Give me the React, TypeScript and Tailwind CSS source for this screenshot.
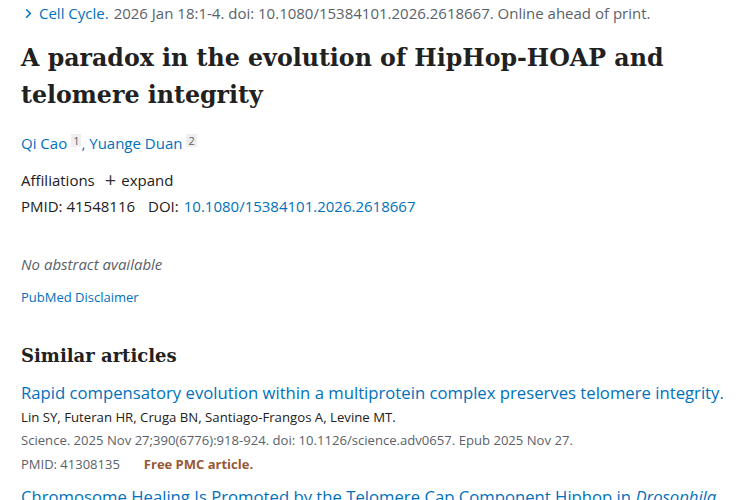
import { ChevronRight } from 'lucide-react'

const sans = "font-['Segoe_UI','Open_Sans','Noto_Sans',sans-serif]"
const serif = "font-['DejaVu_Serif','Liberation_Serif',serif]"

export default function App() {
  return (
    <main className={`${sans} w-[750px] h-[500px] overflow-hidden bg-white pl-[21px] text-[#212121]`}>
      {/* citation line */}
      <div className="flex items-center h-[26px] text-[15px] text-[#5b616b]">
        <ChevronRight className="w-[15px] h-[15px] text-[#0071bc] mr-[3px]" strokeWidth={2.5} />
        <span className="text-[#0071bc]">Cell Cycle.</span>
        <span className="ml-[5px]">2026 Jan 18:1-4. doi: 10.1080/15384101.2026.2618667. Online ahead of print.</span>
      </div>

      <h1 className={`${serif} mt-[14px] text-[23.7px] leading-[37px] font-bold text-[#212121]`}>
        A paradox in the evolution of HipHop-HOAP and<br />telomere integrity
      </h1>

      <div className="mt-[19px] flex items-center text-[15px] text-[#0071bc] h-[20px]">
        <span>Qi Cao</span>
        <span className="ml-[4px] -mt-[6px] text-[11px] leading-[13px] px-[2px] bg-[#eeeeee] text-[#5b616b]">1</span>
        <span>, Yuange Duan</span>
        <span className="ml-[4px] -mt-[6px] text-[11px] leading-[13px] px-[2px] bg-[#eeeeee] text-[#5b616b]">2</span>
      </div>

      <div className="mt-[17px] flex items-center text-[15px] h-[20px]">
        <span>Affiliations</span>
        <span className="ml-[10px] text-[20px] leading-none text-[#333]">+</span>
        <span className="ml-[5px]">expand</span>
      </div>

      <div className="mt-[6px] flex items-center text-[15px] h-[20px]">
        <span>PMID: 41548116</span>
        <span className="ml-[13px]">DOI:</span>
        <span className="ml-[5px] text-[#0071bc]">10.1080/15384101.2026.2618667</span>
      </div>

      <div className="mt-[37px] text-[15px] italic text-[#5b616b] h-[20px]">No abstract available</div>

      <div className="mt-[15px] text-[13px] text-[#0071bc] h-[18px]">PubMed Disclaimer</div>

      <h2 className={`${serif} mt-[36px] text-[18px] font-bold leading-[28px]`}>Similar articles</h2>

      <div className="mt-[12px] text-[16.7px] leading-[22px] text-[#0071bc] whitespace-nowrap">
        Rapid compensatory evolution within a multiprotein complex preserves telomere integrity.
      </div>
      <div className="mt-[4px] text-[13.2px] leading-[18px]">
        Lin SY, Futeran HR, Cruga BN, Santiago-Frangos A, Levine MT.
      </div>
      <div className="mt-[5px] text-[13.1px] leading-[18px] text-[#5b616b]">
        Science. 2025 Nov 27;390(6776):918-924. doi: 10.1126/science.adv0657. Epub 2025 Nov 27.
      </div>
      <div className="mt-[6px] flex text-[13px] leading-[18px] text-[#5b616b]">
        <span>PMID: 41308135</span>
        <span className="ml-[24px] font-bold text-[#985735]">Free PMC article.</span>
      </div>
      <div className="mt-[13px] text-[16.7px] leading-[22px] text-[#0071bc] whitespace-nowrap">
        Chromosome Healing Is Promoted by the Telomere Cap Component Hiphop in <i>Drosophila</i>.
      </div>
    </main>
  )
}
